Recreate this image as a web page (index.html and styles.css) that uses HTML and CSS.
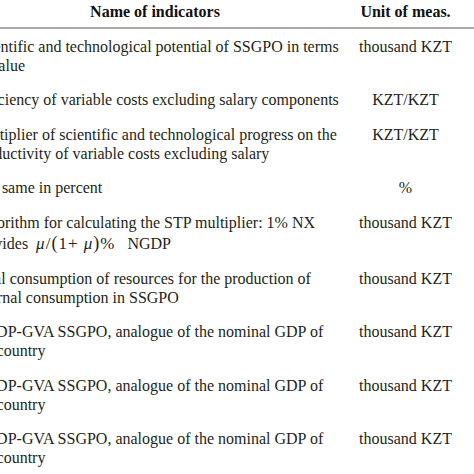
FILE: index.html
```html
<!DOCTYPE html>
<html lang="en">
<head>
<meta charset="utf-8">
<title>Indicators</title>
<link rel="stylesheet" href="styles.css">
</head>
<body>
<div class="frame">
  <table class="indicators">
    <thead>
      <tr>
        <th class="name">Name of indicators</th>
        <th class="unit">Unit of meas.</th>
      </tr>
    </thead>
    <tbody>
      <tr>
        <td class="name">Scientific and technological potential of SSGPO in terms<br>of value</td>
        <td class="unit">thousand KZT</td>
      </tr>
      <tr>
        <td class="name">Efficiency of variable costs excluding salary components</td>
        <td class="unit">KZT/KZT</td>
      </tr>
      <tr>
        <td class="name">Multiplier of scientific and technological progress on the<br>productivity of variable costs excluding salary</td>
        <td class="unit">KZT/KZT</td>
      </tr>
      <tr>
        <td class="name">The same in percent</td>
        <td class="unit">%</td>
      </tr>
      <tr>
        <td class="name">Algorithm for calculating the STP multiplier: 1% NX<br><span class="mathline">provides <span class="math"><i>μ</i>/<span class="paren">(</span>1+ <i>μ</i><span class="paren">)</span>%</span> NGDP</span></td>
        <td class="unit">thousand KZT</td>
      </tr>
      <tr>
        <td class="name">Total consumption of resources for the production of<br>internal consumption in SSGPO</td>
        <td class="unit">thousand KZT</td>
      </tr>
      <tr>
        <td class="name">NGDP-GVA SSGPO, analogue of the nominal GDP of<br>the country</td>
        <td class="unit">thousand KZT</td>
      </tr>
      <tr>
        <td class="name">NGDP-GVA SSGPO, analogue of the nominal GDP of<br>the country</td>
        <td class="unit">thousand KZT</td>
      </tr>
      <tr>
        <td class="name">NGDP-GVA SSGPO, analogue of the nominal GDP of<br>the country</td>
        <td class="unit">thousand KZT</td>
      </tr>
    </tbody>
  </table>
</div>
</body>
</html>
```

FILE: styles.css
```css
html, body {
  margin: 0;
  padding: 0;
  background: #ffffff;
}

.frame {
  width: 474px;
  height: 474px;
  overflow: hidden;
}

.indicators {
  border-collapse: collapse;
  margin-left: -27px;
  width: 501px;
  table-layout: fixed;
  font-family: "Liberation Serif", "Times New Roman", serif;
  font-size: 16px;
  line-height: 19px;
  color: #231f20;
}

.indicators th {
  font-weight: bold;
  color: #111111;
  padding: 2px 0 6px 0;
  border-bottom: 2px solid #aba7a3;
  text-align: center;
  white-space: nowrap;
}

.indicators th.name {
  width: 364px;
}

.indicators td {
  padding: 7.5px 0 8px 0;
  vertical-align: top;
  white-space: nowrap;
}

.indicators td.name {
  text-align: left;
}

.indicators td.unit {
  text-align: center;
}

.mathline {
  display: inline-block;
  padding-top: 2.5px;
}

.math {
  font-size: 17px;
  letter-spacing: 1px;
  margin: 0 8px 0 4px;
}

.math i {
  font-style: italic;
}

.paren {
  font-size: 18px;
}
```
